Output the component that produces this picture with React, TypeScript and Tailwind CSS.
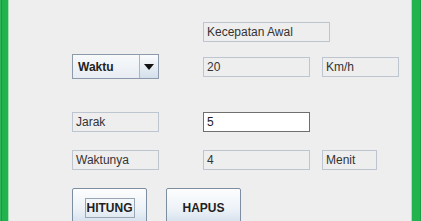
const font = { fontFamily: '"Liberation Sans", Arial, sans-serif' }

function Field({ text, w }: { text: string; w: string }) {
  return (
    <div className={`${w} h-[20px] border border-[#bcc5d0] bg-[#eeeeee] pl-[3px] flex items-center text-[12px] text-[#333333]`}>
      {text}
    </div>
  )
}

function Combo() {
  return (
    <div className="w-[87px] h-[25px] border border-[#8d9aab] flex bg-[#f0f3f7]">
      <div className="flex-1 flex items-center pl-[5px] text-[12px] font-bold text-[#222] bg-gradient-to-b from-[#f7f9fb] to-[#e8edf3]">
        Waktu
      </div>
      <div className="w-[19px] border-l border-[#aab4c2] bg-gradient-to-b from-[#fbfcfd] to-[#d3dfeb] flex items-center justify-center">
        <svg width="10" height="6" viewBox="0 0 10 6">
          <path d="M0 0 H10 L5 6 Z" fill="#111" />
        </svg>
      </div>
    </div>
  )
}

function Btn({ label, focus }: { label: string; focus?: boolean }) {
  return (
    <div className="w-[75px] h-[40px] rounded-[2px] border border-[#7d8ea3] bg-gradient-to-b from-[#fdfdfe] via-[#eef3f8] to-[#cfdcea] flex items-center justify-center">
      <span className={`text-[12px] font-bold text-[#222] px-[1px] ${focus ? 'outline outline-1 outline-[#9aa6b4]' : ''}`}>{label}</span>
    </div>
  )
}

export default function App() {
  return (
    <div className="w-[421px] h-[221px] overflow-hidden flex bg-[#eeeeee]" style={font}>
      <div className="w-[9px] h-full flex shrink-0">
        <div className="w-[1px] bg-[#30b45c]" />
        <div className="w-[1px] bg-[#159a42]" />
        <div className="w-[6px] bg-[#22b24e]" />
        <div className="w-[1px] bg-[#a9dfb8]" />
      </div>

      <div className="flex-1 flex flex-col pl-[63px] pt-[22px]">
        <div className="flex items-center h-[20px]">
          <div className="w-[131px]" />
          <Field text="Kecepatan Awal" w="w-[127px]" />
        </div>

        <div className="flex items-center h-[25px] mt-[12px]">
          <Combo />
          <div className="ml-[44px]">
            <Field text="20" w="w-[107px]" />
          </div>
          <div className="ml-[12px]">
            <Field text="Km/h" w="w-[77px]" />
          </div>
        </div>

        <div className="flex items-center h-[20px] mt-[33px]">
          <Field text="Jarak" w="w-[87px]" />
          <div className="ml-[44px] w-[107px] h-[20px] border border-[#6f6f6f] bg-white pl-[3px] flex items-center text-[12px] text-[#222]">
            5
          </div>
        </div>

        <div className="flex items-center h-[20px] mt-[18px]">
          <Field text="Waktunya" w="w-[87px]" />
          <div className="ml-[44px]">
            <Field text="4" w="w-[107px]" />
          </div>
          <div className="ml-[12px]">
            <Field text="Menit" w="w-[55px]" />
          </div>
        </div>

        <div className="flex mt-[18px] gap-[19px]">
          <Btn label="HITUNG" focus />
          <Btn label="HAPUS" />
        </div>
      </div>

      <div className="w-[10px] h-full flex shrink-0">
        <div className="w-[1px] bg-[#a9dfb8]" />
        <div className="w-[8px] bg-[#22b24e]" />
        <div className="w-[1px] bg-[#189c45]" />
      </div>
    </div>
  )
}
